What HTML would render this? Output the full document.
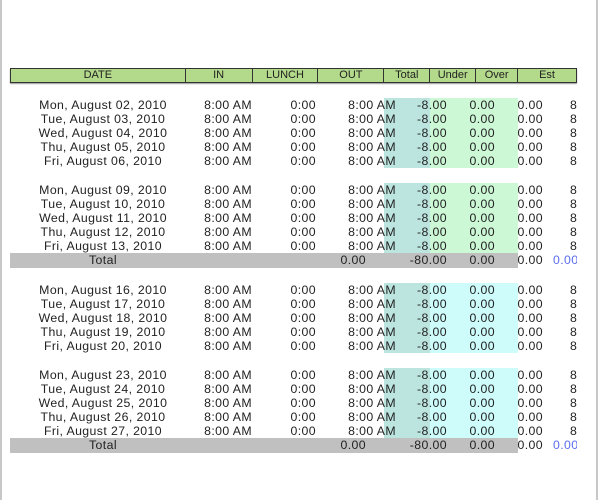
<!DOCTYPE html>
<html><head><meta charset="utf-8"><style>
*{margin:0;padding:0;box-sizing:border-box}
body{width:600px;height:500px;background:#fff;position:relative;overflow:hidden;font-family:"Liberation Sans",sans-serif;font-size:12.3px;letter-spacing:0.4px;color:#222}
.fr{position:absolute;left:0;top:0;width:598px;height:500px;border-left:2px solid #c8c8c8;border-right:2px solid #c8c8c8}
.hdr{position:absolute;left:10px;top:68px;width:567px;height:15px;background:#b3d98a;border:1.5px solid #333;display:flex;font-size:11px;letter-spacing:0;line-height:12px;box-shadow:0 1px 1px #999}
.hdr div{text-align:center;border-right:1.5px solid #333}
.hdr div:last-child{border-right:none}
.band{position:absolute;left:384px;width:134px;height:70px}
.t{position:absolute;left:384px;width:46px;height:70px;background:#bde5e0}
.g{background:#ccf8d6}.c{background:#cdfcfb}
.tot{position:absolute;left:10px;width:508px;height:15px;background:#c0c0c0}
.r{position:absolute;left:0;width:577px;height:14px;line-height:14px;overflow:hidden;white-space:nowrap}
.r span{position:absolute;text-align:right}
.d{left:10px;width:186px;text-align:center!important}
.i{left:185px;width:67px}.l{left:252px;width:64px}.o{left:318px;width:78px}
.tt{left:398px;width:49px}.u{left:448px;width:47px}.v{left:496px;width:47px}.e{left:570px;text-align:left!important}
.b{color:#5a6cf0}
</style></head><body>
<div class="fr"></div>
<div class="hdr"><div style="width:175px">DATE</div><div style="width:67px">IN</div><div style="width:66px">LUNCH</div><div style="width:66px">OUT</div><div style="width:46px">Total</div><div style="width:46px">Under</div><div style="width:42px">Over</div><div style="width:58px">Est</div></div>

<div class="band g" style="top:98px"></div><div class="t" style="top:98px"></div>
<div class="band g" style="top:183px"></div><div class="t" style="top:183px"></div>
<div class="band c" style="top:283px"></div><div class="t" style="top:283px"></div>
<div class="band c" style="top:368px"></div><div class="t" style="top:368px"></div>
<div class="tot" style="top:253px"></div>
<div class="tot" style="top:438px"></div>

<div class="r" style="top:98px"><span class="d">Mon, August 02, 2010</span><span class="i">8:00 AM</span><span class="l">0:00</span><span class="o">8:00 AM</span><span class="tt">-8.00</span><span class="u">0.00</span><span class="v">0.00</span><span class="e">8.00</span></div>
<div class="r" style="top:112px"><span class="d">Tue, August 03, 2010</span><span class="i">8:00 AM</span><span class="l">0:00</span><span class="o">8:00 AM</span><span class="tt">-8.00</span><span class="u">0.00</span><span class="v">0.00</span><span class="e">8.00</span></div>
<div class="r" style="top:126px"><span class="d">Wed, August 04, 2010</span><span class="i">8:00 AM</span><span class="l">0:00</span><span class="o">8:00 AM</span><span class="tt">-8.00</span><span class="u">0.00</span><span class="v">0.00</span><span class="e">8.00</span></div>
<div class="r" style="top:140px"><span class="d">Thu, August 05, 2010</span><span class="i">8:00 AM</span><span class="l">0:00</span><span class="o">8:00 AM</span><span class="tt">-8.00</span><span class="u">0.00</span><span class="v">0.00</span><span class="e">8.00</span></div>
<div class="r" style="top:154px"><span class="d">Fri, August 06, 2010</span><span class="i">8:00 AM</span><span class="l">0:00</span><span class="o">8:00 AM</span><span class="tt">-8.00</span><span class="u">0.00</span><span class="v">0.00</span><span class="e">8.00</span></div>

<div class="r" style="top:183px"><span class="d">Mon, August 09, 2010</span><span class="i">8:00 AM</span><span class="l">0:00</span><span class="o">8:00 AM</span><span class="tt">-8.00</span><span class="u">0.00</span><span class="v">0.00</span><span class="e">8.00</span></div>
<div class="r" style="top:197px"><span class="d">Tue, August 10, 2010</span><span class="i">8:00 AM</span><span class="l">0:00</span><span class="o">8:00 AM</span><span class="tt">-8.00</span><span class="u">0.00</span><span class="v">0.00</span><span class="e">8.00</span></div>
<div class="r" style="top:211px"><span class="d">Wed, August 11, 2010</span><span class="i">8:00 AM</span><span class="l">0:00</span><span class="o">8:00 AM</span><span class="tt">-8.00</span><span class="u">0.00</span><span class="v">0.00</span><span class="e">8.00</span></div>
<div class="r" style="top:225px"><span class="d">Thu, August 12, 2010</span><span class="i">8:00 AM</span><span class="l">0:00</span><span class="o">8:00 AM</span><span class="tt">-8.00</span><span class="u">0.00</span><span class="v">0.00</span><span class="e">8.00</span></div>
<div class="r" style="top:239px"><span class="d">Fri, August 13, 2010</span><span class="i">8:00 AM</span><span class="l">0:00</span><span class="o">8:00 AM</span><span class="tt">-8.00</span><span class="u">0.00</span><span class="v">0.00</span><span class="e">8.00</span></div>
<div class="r" style="top:253px"><span class="d">Total</span><span class="o" style="width:48px">0.00</span><span class="tt">-80.00</span><span class="u">0.00</span><span class="v">0.00</span><span class="e b" style="left:553px">0.00</span></div>

<div class="r" style="top:283px"><span class="d">Mon, August 16, 2010</span><span class="i">8:00 AM</span><span class="l">0:00</span><span class="o">8:00 AM</span><span class="tt">-8.00</span><span class="u">0.00</span><span class="v">0.00</span><span class="e">8.00</span></div>
<div class="r" style="top:297px"><span class="d">Tue, August 17, 2010</span><span class="i">8:00 AM</span><span class="l">0:00</span><span class="o">8:00 AM</span><span class="tt">-8.00</span><span class="u">0.00</span><span class="v">0.00</span><span class="e">8.00</span></div>
<div class="r" style="top:311px"><span class="d">Wed, August 18, 2010</span><span class="i">8:00 AM</span><span class="l">0:00</span><span class="o">8:00 AM</span><span class="tt">-8.00</span><span class="u">0.00</span><span class="v">0.00</span><span class="e">8.00</span></div>
<div class="r" style="top:325px"><span class="d">Thu, August 19, 2010</span><span class="i">8:00 AM</span><span class="l">0:00</span><span class="o">8:00 AM</span><span class="tt">-8.00</span><span class="u">0.00</span><span class="v">0.00</span><span class="e">8.00</span></div>
<div class="r" style="top:339px"><span class="d">Fri, August 20, 2010</span><span class="i">8:00 AM</span><span class="l">0:00</span><span class="o">8:00 AM</span><span class="tt">-8.00</span><span class="u">0.00</span><span class="v">0.00</span><span class="e">8.00</span></div>

<div class="r" style="top:368px"><span class="d">Mon, August 23, 2010</span><span class="i">8:00 AM</span><span class="l">0:00</span><span class="o">8:00 AM</span><span class="tt">-8.00</span><span class="u">0.00</span><span class="v">0.00</span><span class="e">8.00</span></div>
<div class="r" style="top:382px"><span class="d">Tue, August 24, 2010</span><span class="i">8:00 AM</span><span class="l">0:00</span><span class="o">8:00 AM</span><span class="tt">-8.00</span><span class="u">0.00</span><span class="v">0.00</span><span class="e">8.00</span></div>
<div class="r" style="top:396px"><span class="d">Wed, August 25, 2010</span><span class="i">8:00 AM</span><span class="l">0:00</span><span class="o">8:00 AM</span><span class="tt">-8.00</span><span class="u">0.00</span><span class="v">0.00</span><span class="e">8.00</span></div>
<div class="r" style="top:410px"><span class="d">Thu, August 26, 2010</span><span class="i">8:00 AM</span><span class="l">0:00</span><span class="o">8:00 AM</span><span class="tt">-8.00</span><span class="u">0.00</span><span class="v">0.00</span><span class="e">8.00</span></div>
<div class="r" style="top:424px"><span class="d">Fri, August 27, 2010</span><span class="i">8:00 AM</span><span class="l">0:00</span><span class="o">8:00 AM</span><span class="tt">-8.00</span><span class="u">0.00</span><span class="v">0.00</span><span class="e">8.00</span></div>
<div class="r" style="top:438px"><span class="d">Total</span><span class="o" style="width:48px">0.00</span><span class="tt">-80.00</span><span class="u">0.00</span><span class="v">0.00</span><span class="e b" style="left:553px">0.00</span></div>
</body></html>
